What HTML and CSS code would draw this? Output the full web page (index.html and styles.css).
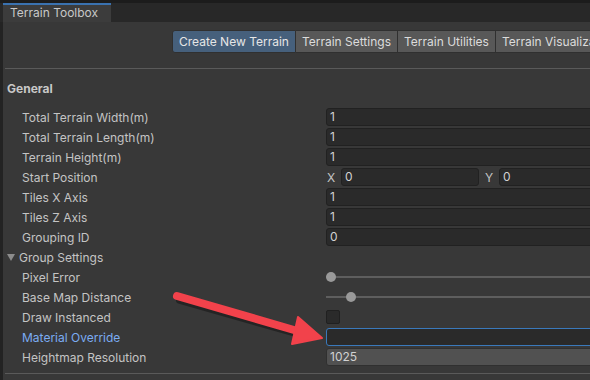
FILE: index.html
```html
<!DOCTYPE html>
<html>
<head>
  <meta charset="UTF-8">
  <link rel="stylesheet" href="styles.css">
</head>
<body>
  <div class="window">
    <div class="tabbar">
      <div class="tab">Terrain Toolbox</div>
    </div>

    <div class="panel">
      <div class="toolbar">
        <div class="tool-btn active">Create New Terrain</div>
        <div class="tool-btn">Terrain Settings</div>
        <div class="tool-btn">Terrain Utilities</div>
        <div class="tool-btn">Terrain Visualization</div>
      </div>

      <div class="divider"></div>

      <div class="section-title">General</div>

      <div class="rows">
        <div class="row">
          <div class="label">Total Terrain Width(m)</div>
          <div class="field">1</div>
        </div>
        <div class="row">
          <div class="label">Total Terrain Length(m)</div>
          <div class="field">1</div>
        </div>
        <div class="row">
          <div class="label">Terrain Height(m)</div>
          <div class="field">1</div>
        </div>
        <div class="row">
          <div class="label">Start Position</div>
          <div class="vector">
            <span class="axis">X</span>
            <div class="field field-x">0</div>
            <span class="axis axis-y">Y</span>
            <div class="field">0</div>
          </div>
        </div>
        <div class="row">
          <div class="label">Tiles X Axis</div>
          <div class="field">1</div>
        </div>
        <div class="row">
          <div class="label">Tiles Z Axis</div>
          <div class="field">1</div>
        </div>
        <div class="row">
          <div class="label">Grouping ID</div>
          <div class="field">0</div>
        </div>
        <div class="row">
          <div class="foldout"><span class="triangle"></span>Group Settings</div>
        </div>
        <div class="row">
          <div class="label">Pixel Error</div>
          <div class="slider">
            <div class="track"></div>
            <div class="thumb thumb-pixel"></div>
          </div>
        </div>
        <div class="row">
          <div class="label">Base Map Distance</div>
          <div class="slider">
            <div class="track"></div>
            <div class="thumb thumb-basemap"></div>
          </div>
        </div>
        <div class="row">
          <div class="label">Draw Instanced</div>
          <div class="checkbox"></div>
        </div>
        <div class="row">
          <div class="label label-focus">Material Override</div>
          <div class="field field-focus"></div>
        </div>
        <div class="row">
          <div class="label">Heightmap Resolution</div>
          <div class="field field-light">1025</div>
        </div>
      </div>

      <div class="divider divider-bottom"></div>
    </div>

    <svg class="arrow" width="590" height="380" viewBox="0 0 590 380">
      <line x1="180" y1="300" x2="296" y2="333" stroke="rgba(0,0,0,0.35)" stroke-width="8" stroke-linecap="round"/>
      <line x1="177" y1="296" x2="294" y2="330" stroke="#f2424b" stroke-width="8" stroke-linecap="round"/>
      <polygon points="298,317 322,338 292,344" fill="#f2424b" stroke="#f2424b" stroke-width="2" stroke-linejoin="round"/>
    </svg>
  </div>
</body>
</html>
```

FILE: styles.css
```css
body {
  margin: 0;
  padding: 0;
  width: 590px;
  height: 380px;
  overflow: hidden;
  background: #232323;
  font-family: 'Inter', 'Noto Sans', sans-serif;
  font-size: 12px;
  color: #c4c4c4;
}

.window {
  position: relative;
  height: 100%;
  display: flex;
  flex-direction: column;
}

/* Editor tab strip */
.tabbar {
  height: 19px;
  border-top: 3px solid #1c1c1c;
  background: #282828;
  display: flex;
  padding-left: 3px;
}

.tab {
  width: 108px;
  box-sizing: border-box;
  border-top: 2px solid #3a72b0;
  background: #3c3c3c;
  color: #c8c8c8;
  padding-left: 7px;
  line-height: 16px;
  font-size: 12px;
}

.panel {
  flex: 1;
  margin-left: 3px;
  background: #383838;
  display: flex;
  flex-direction: column;
}

/* Toolbar */
.toolbar {
  display: flex;
  margin-top: 8px;
  padding-left: 169px;
  height: 23px;
  white-space: nowrap;
}

.tool-btn {
  flex: 0 0 auto;
  box-sizing: border-box;
  height: 23px;
  line-height: 21px;
  padding: 0 6px;
  background: #585858;
  border: 1px solid #303030;
  border-left: none;
  color: #dcdcdc;
}

.tool-btn.active {
  background: #46607c;
  border-left: 1px solid #303030;
  border-radius: 3px 0 0 3px;
  color: #e6e6e6;
}

.divider {
  height: 1px;
  background: #5a5a5a;
  margin: 15px 0 0 2px;
}

.divider-bottom {
  margin-top: 6px;
}

.section-title {
  font-weight: bold;
  padding-left: 4px;
  margin-top: 12px;
  line-height: 15px;
  color: #c8c8c8;
}

.rows {
  margin-top: 11px;
  display: flex;
  flex-direction: column;
}

.row {
  display: flex;
  align-items: center;
  height: 20px;
}

.label {
  flex: 0 0 304px;
  padding-left: 19px;
  white-space: nowrap;
  color: #c4c4c4;
}

.label-focus {
  color: #7bacf2;
}

.field {
  flex: 1;
  box-sizing: border-box;
  height: 18px;
  line-height: 16px;
  margin-right: -10px;
  padding-left: 3px;
  background: #2a2a2a;
  border: 1px solid #212121;
  border-radius: 3px;
  color: #d2d2d2;
}

.field-focus {
  border-color: #3a79bb;
}

.field-light {
  background: #515151;
  border-color: #303030;
}

/* Start Position x/y */
.vector {
  flex: 1;
  display: flex;
  align-items: center;
}

.axis {
  width: 15px;
  padding-left: 1px;
  box-sizing: border-box;
  color: #c4c4c4;
}

.axis-y {
  width: 20px;
  padding-left: 6px;
}

.field-x {
  flex: 0 0 138px;
  margin-right: 0;
}

.foldout {
  display: flex;
  align-items: center;
  padding-left: 4px;
  gap: 4px;
}

.triangle {
  width: 0;
  height: 0;
  border-left: 4px solid transparent;
  border-right: 4px solid transparent;
  border-top: 7px solid #8c8c8c;
}

/* Sliders */
.slider {
  flex: 1;
  position: relative;
  height: 20px;
}

.track {
  margin-top: 9px;
  height: 2px;
  background: #5e5e5e;
}

.thumb {
  position: absolute;
  top: 5px;
  width: 10px;
  height: 10px;
  border-radius: 50%;
  background: #999999;
}

.thumb-pixel {
  left: 0;
}

.thumb-basemap {
  left: 20px;
}

.checkbox {
  width: 14px;
  height: 14px;
  box-sizing: border-box;
  background: #2a2a2a;
  border: 1px solid #202020;
  border-radius: 2px;
}

.arrow {
  position: absolute;
  left: 0;
  top: 0;
  pointer-events: none;
}
```
